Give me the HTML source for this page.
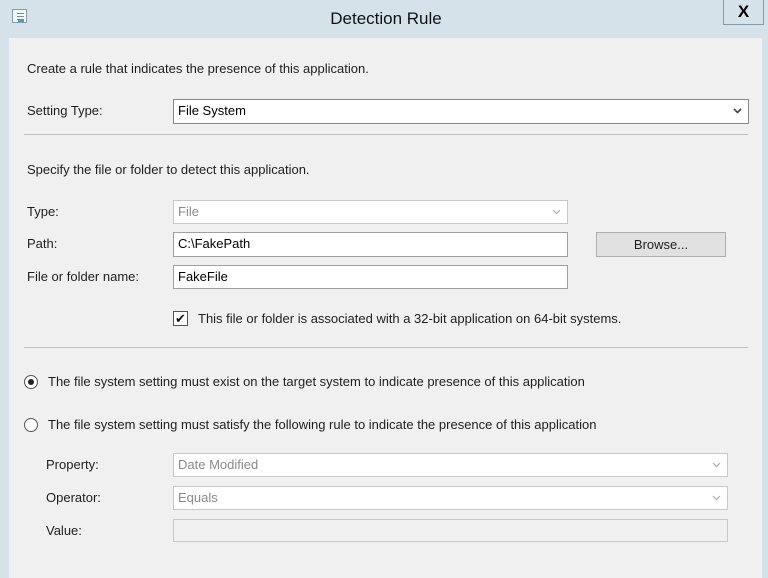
<!DOCTYPE html>
<html><head><meta charset="utf-8"><style>
*{box-sizing:border-box;margin:0;padding:0}
body{width:768px;height:570px;overflow:hidden;background:#d5e2ea;font-family:"Liberation Sans",sans-serif;font-size:13px;color:#1e1e1e;position:relative;letter-spacing:0}
.a{position:absolute;white-space:nowrap}
.panel{position:absolute;left:9px;top:38px;width:753px;height:540px;background:#f0f0f0}
.box{position:absolute;background:#fff;border:1px solid #a0a0a0;padding-left:4px;line-height:22px}
.dis{border-color:#c8c8c8;color:#8a8a8a}
.chev{position:absolute;right:6px;top:8px;width:9px;height:6px}
.sep{position:absolute;height:1px;background:#c0c0c0;left:24px;width:724px}
</style></head><body>
<div class="a" style="left:12px;top:9px;width:15px;height:14px;border:1px solid #8a9aa5;background:#f4f7f9">
 <div style="position:absolute;left:4px;top:3px;width:7px;height:1px;background:#7a8a95;box-shadow:0 3px #7a8a95,0 6px #7a8a95"></div>
 <div style="position:absolute;left:5px;top:10px;width:6px;height:2px;background:#3aa0d8"></div>
</div>
<div class="a" style="left:0;width:772px;top:9px;text-align:center;font-size:17px;color:#111">Detection Rule</div>
<div class="a" style="left:723px;top:-1px;width:41px;height:26px;border:1px solid #8a9aa5;background:#d5e2ea;text-align:center;font-weight:bold;font-size:17px;line-height:24px;color:#000">X</div>
<div class="panel"></div>
<div class="a" style="left:27px;top:61px">Create a rule that indicates the presence of this application.</div>
<div class="a" style="left:27px;top:103px">Setting Type:</div>
<div class="box" style="left:173px;top:99px;width:576px;height:25px;border-color:#888;color:#000">File System<svg class="chev" viewBox="0 0 9 6"><path d="M1 1L4.5 4.5L8 1" fill="none" stroke="#444" stroke-width="1.6"/></svg></div>
<div class="sep" style="top:134px"></div>
<div class="a" style="left:27px;top:162px">Specify the file or folder to detect this application.</div>
<div class="a" style="left:27px;top:204px">Type:</div>
<div class="box dis" style="left:173px;top:200px;width:395px;height:24px">File<svg class="chev" viewBox="0 0 9 6"><path d="M1 1L4.5 4.5L8 1" fill="none" stroke="#aaa" stroke-width="1.2"/></svg></div>
<div class="a" style="left:27px;top:236px">Path:</div>
<div class="box" style="left:173px;top:232px;width:395px;height:25px;color:#000">C:\FakePath</div>
<div class="a" style="left:596px;top:232px;width:130px;height:25px;border:1px solid #adadad;background:#e1e1e1;text-align:center;line-height:23px">Browse...</div>
<div class="a" style="left:27px;top:269px">File or folder name:</div>
<div class="box" style="left:173px;top:265px;width:395px;height:24px;color:#000">FakeFile</div>
<div class="a" style="left:173px;top:311px;width:15px;height:15px;border:1px solid #555;background:#fff;font-size:13px;line-height:13px;text-align:center;color:#111">&#10004;</div>
<div class="a" style="left:198px;top:311px">This file or folder is associated with a 32-bit application on 64-bit systems.</div>
<div class="sep" style="top:347px"></div>
<div class="a" style="left:24px;top:375px;width:14px;height:14px;border:1px solid #555;border-radius:50%;background:#fff"><div style="position:absolute;left:3px;top:3px;width:6px;height:6px;border-radius:50%;background:#222"></div></div>
<div class="a" style="left:48px;top:374px">The file system setting must exist on the target system to indicate presence of this application</div>
<div class="a" style="left:24px;top:418px;width:14px;height:14px;border:1px solid #555;border-radius:50%;background:#fff"></div>
<div class="a" style="left:48px;top:417px">The file system setting must satisfy the following rule to indicate the presence of this application</div>
<div class="a" style="left:46px;top:457px">Property:</div>
<div class="box dis" style="left:173px;top:453px;width:555px;height:24px">Date Modified<svg class="chev" viewBox="0 0 9 6"><path d="M1 1L4.5 4.5L8 1" fill="none" stroke="#aaa" stroke-width="1.2"/></svg></div>
<div class="a" style="left:46px;top:490px">Operator:</div>
<div class="box dis" style="left:173px;top:486px;width:555px;height:24px">Equals<svg class="chev" viewBox="0 0 9 6"><path d="M1 1L4.5 4.5L8 1" fill="none" stroke="#aaa" stroke-width="1.2"/></svg></div>
<div class="a" style="left:46px;top:523px">Value:</div>
<div class="box dis" style="left:173px;top:519px;width:555px;height:23px;background:#f0f0f0"></div>
</body></html>
